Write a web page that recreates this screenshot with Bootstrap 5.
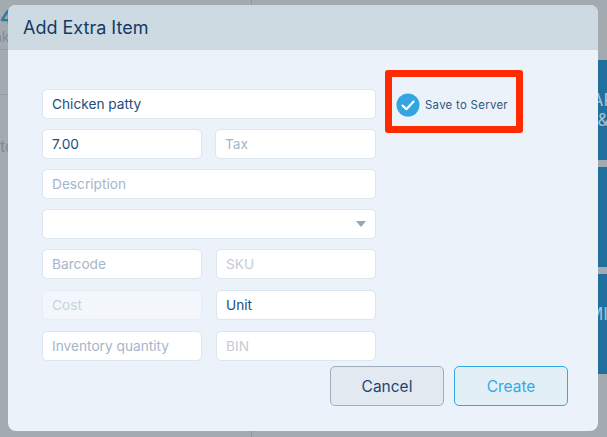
<!DOCTYPE html>
<html lang="en">
<head>
<meta charset="utf-8">
<title>Add Extra Item</title>
<link rel="stylesheet" href="https://cdn.jsdelivr.net/npm/bootstrap@5.3.0/dist/css/bootstrap.min.css">
<style>
html,body{height:437px;overflow:hidden}
body{background:#a3abb0;font-family:Inter,"Liberation Sans",sans-serif;position:relative}
.back-page{height:437px}
.back-left{width:252px;height:437px;border-right:1px solid #8d979c;color:#7f8c93;font-size:14px}
.back-line{border-bottom:1px solid #949da2;overflow:hidden;white-space:nowrap}
.back-num{height:50px;line-height:20px;padding-top:7px}
.back-num b{display:block;color:#2a7ca3;font-size:19px;line-height:22px}
.back-num span{display:block;line-height:16px;text-indent:-6px}
.back-sec{height:45px}
.back-to{padding-top:41px;font-size:16px;line-height:20px}
.back-tiles{width:90px;padding-top:60px;gap:7px}
.tile{height:100px;background:#1f709c;color:#a7c3d3;font-size:17px;line-height:20px;white-space:nowrap;overflow:hidden;padding-left:74px}
.tile-label{width:24px;text-align:center}
.tile-mi{padding-left:71px;padding-bottom:20px}
.dialog{position:absolute;left:8px;top:5px;width:590px;height:426px;background:#ebf2f9;border:0;border-radius:8px;overflow:hidden}
.dialog .card-header{height:45px;background:#cddae1;border:0;border-radius:0;padding:0 15px;color:#143a66;font-size:18px;line-height:45px}
.dialog .card-body{padding:39px 0 0 34px}
.form-stack{width:334px;gap:10px}
.form-stack .wide-gap{margin-top:1px}
.form-pair{gap:14px}
.field{height:30px;padding:0 9px;font-size:13.7px;color:#234d7a;background-color:#fff;border:1px solid #dce6ef;border-radius:5px;box-shadow:none}
.field::placeholder{color:#a6b6c9;opacity:1}
.field.pale::placeholder{color:#c6cdd6}
.field:disabled{background:#f3f7fb;border-color:#e6edf4}
.field:disabled::placeholder{color:#c7d3df}
.pair-a{width:160px;flex:none}
.pair-b{width:160px;flex:none}
.form-pair-tax{gap:13px}
.form-pair-tax .pair-b{width:161px}
.picker{height:30px;padding:0 9px;background-image:none;border:1px solid #dce6ef;border-radius:5px;background-color:#fff}
.picker-wrap{position:relative}
.picker-arrow{position:absolute;right:10px;top:12px;width:0;height:0;border-left:5.5px solid transparent;border-right:5.5px solid transparent;border-top:6px solid #8fa6bf;pointer-events:none}
.save-check{position:absolute;left:388px;top:87px;color:#2f5580;font-size:11.4px;letter-spacing:.3px;gap:5px;line-height:24px}
.save-check svg{display:block}
.save-check span{padding-top:1px}
.red-box{position:absolute;left:377px;top:65px;width:138px;height:63px;border:7px solid #ff2a00;border-radius:3px;pointer-events:none}
.dialog-actions{position:absolute;right:30px;top:361px;gap:10px}
.act{width:114px;height:40px;font-size:15.5px;border-radius:5px;padding:0;line-height:37px}
.act-cancel{background:#e3e9f1;border:1.5px solid #9eaec0;color:#1d4672}
.act-create{background:#e2eff7;border:1.5px solid #35a8e3;color:#35a8e3}
</style>
</head>
<body>
<div class="back-page d-flex justify-content-between">
  <div class="back-left">
    <div class="back-line back-num"><b>4</b><span>ak</span></div>
    <div class="back-line back-sec"></div>
    <div class="back-to overflow-hidden text-nowrap">to</div>
  </div>
  <div class="back-tiles d-flex flex-column">
    <div class="tile d-flex flex-column justify-content-center"><span class="tile-label">AP</span><span class="tile-label">&amp;</span></div>
    <div class="tile"></div>
    <div class="tile tile-mi d-flex flex-column justify-content-center"><span>MI</span></div>
  </div>
</div>

<div class="card dialog">
  <div class="card-header">Add Extra Item</div>
  <div class="card-body">
    <form class="form-stack d-flex flex-column">
      <input class="form-control field" type="text" value="Chicken patty" aria-label="Name">
      <div class="d-flex form-pair form-pair-tax">
        <input class="form-control field pair-a" type="text" value="7.00" aria-label="Price">
        <input class="form-control field pair-b" type="text" placeholder="Tax">
      </div>
      <input class="form-control field" type="text" placeholder="Description">
      <div class="picker-wrap">
        <select class="form-select picker" aria-label="Category"><option></option></select>
        <span class="picker-arrow"></span>
      </div>
      <div class="d-flex form-pair">
        <input class="form-control field pair-a" type="text" placeholder="Barcode">
        <input class="form-control field pale pair-b" type="text" placeholder="SKU">
      </div>
      <div class="d-flex form-pair wide-gap">
        <input class="form-control field pair-a" type="text" placeholder="Cost" disabled>
        <input class="form-control field pair-b" type="text" value="Unit" aria-label="Unit">
      </div>
      <div class="d-flex form-pair wide-gap">
        <input class="form-control field pair-a" type="text" placeholder="Inventory quantity">
        <input class="form-control field pale pair-b" type="text" placeholder="BIN">
      </div>
    </form>
  </div>
  <div class="save-check d-flex align-items-center">
    <svg width="24" height="24" viewBox="0 0 24 24" aria-hidden="true"><circle cx="12" cy="12" r="11.5" fill="#32a5e2"/><path d="M6.6 12.6l3.8 3.6 7.2-7.6" fill="none" stroke="#fff" stroke-width="2.2" stroke-linecap="round" stroke-linejoin="round"/></svg>
    <span>Save to Server</span>
  </div>
  <div class="red-box"></div>
  <div class="dialog-actions d-flex">
    <button type="button" class="btn act act-cancel">Cancel</button>
    <button type="button" class="btn act act-create">Create</button>
  </div>
</div>
<script src="https://cdn.jsdelivr.net/npm/bootstrap@5.3.0/dist/js/bootstrap.bundle.min.js"></script>
</body>
</html>
